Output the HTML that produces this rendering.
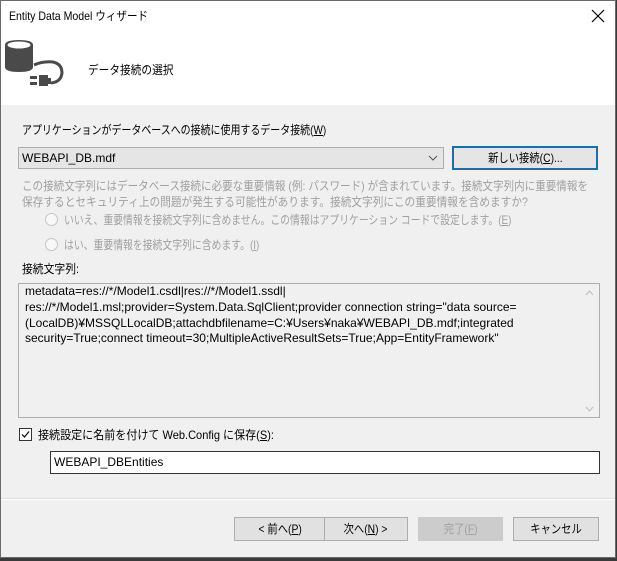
<!DOCTYPE html>
<html><head><meta charset="utf-8"><style>
*{margin:0;padding:0;box-sizing:border-box}
body{width:617px;height:561px;background:#3a3a3a;position:relative;overflow:hidden;font-family:"Liberation Sans","Noto Sans CJK JP",sans-serif;font-size:12px;color:#000}
.win{position:absolute;left:0;top:0;width:616px;height:558px;background:#f0f0f0;border:1px solid #6a6a6a}
.a{position:absolute;white-space:nowrap;line-height:16px;transform-origin:0 50%}
.g{color:#a0a0a0}
.btn{position:absolute;height:24px;border:1px solid #adadad;background:#e1e1e1;text-align:center;line-height:22px;white-space:nowrap}
.btn span{display:inline-block;transform:scaleX(0.86)}
u{text-decoration:underline}
</style></head><body>
<div class="win">
 <div style="position:absolute;left:0;top:0;width:614px;height:104px;background:#fff"></div>
 <div class="a" style="left:8px;top:7px;transform:scaleX(0.88)">Entity Data Model ウィザード</div>
 <svg style="position:absolute;left:590px;top:8px" width="14" height="14" viewBox="0 0 14 14"><path d="M1 1L13 13M13 1L1 13" stroke="#000" stroke-width="1.2"/></svg>
 <svg style="position:absolute;left:0;top:30px" width="70" height="60" viewBox="0 0 70 60">
  <path d="M4 14 Q4 9 18 9 Q32 9 32 14 V36 Q32 41 18 41 Q4 41 4 36Z" fill="#4a4a4a"/>
  <ellipse cx="18" cy="14" rx="11.5" ry="3.5" fill="#fff"/>
  <path d="M33 34 Q42 30 52 31 Q61 33 61 42 Q60 51 50 52" stroke="#4a4a4a" stroke-width="3" fill="none"/>
  <rect x="38" y="44" width="9" height="11" fill="#4a4a4a"/>
  <rect x="47" y="47" width="3" height="6" fill="#4a4a4a"/>
  <rect x="29" y="45" width="7" height="3" fill="#4a4a4a"/><rect x="29" y="51" width="7" height="3" fill="#4a4a4a"/>
 </svg>
 <div class="a" style="left:87px;top:61px;transform:scaleX(0.89)">データ接続の選択</div>

 <div class="a" style="left:21px;top:121px;transform:scaleX(0.83)">アプリケーションがデータベースへの接続に使用するデータ接続(<u>W</u>)</div>
 <div style="position:absolute;left:17px;top:146px;width:426px;height:22px;border:1px solid #adadad;background:#e5e5e5"></div>
 <div class="a" style="left:21px;top:149px">WEBAPI_DB.mdf</div>
 <svg style="position:absolute;left:427px;top:154px" width="10" height="6" viewBox="0 0 10 6"><path d="M1 1L5 5L9 1" stroke="#555" fill="none"/></svg>
 <div class="btn" style="left:451px;top:145px;width:146px;height:24px;border:2px solid #1c6ea4;line-height:20px;background:#e5e5e5"><span>新しい接続(<u>C</u>)...</span></div>

 <div class="a g" style="left:21px;top:177px;transform:scaleX(0.88)">この接続文字列にはデータベース接続に必要な重要情報 (例: パスワード) が含まれています。接続文字列内に重要情報を</div>
 <div class="a g" style="left:21px;top:193px;transform:scaleX(0.89)">保存するとセキュリティ上の問題が発生する可能性があります。接続文字列にこの重要情報を含めますか?</div>
 <div style="position:absolute;left:44px;top:212px;width:13px;height:13px;border:1px solid #c4c4c4;border-radius:50%;background:#f8f8f8"></div>
 <div class="a g" style="left:63px;top:211px;transform:scaleX(0.82)">いいえ、重要情報を接続文字列に含めません。この情報はアプリケーション コードで設定します。(<u>E</u>)</div>
 <div style="position:absolute;left:44px;top:237px;width:13px;height:13px;border:1px solid #c4c4c4;border-radius:50%;background:#f8f8f8"></div>
 <div class="a g" style="left:63px;top:236px;transform:scaleX(0.82)">はい、重要情報を接続文字列に含めます。(<u>I</u>)</div>

 <div class="a" style="left:21px;top:260px;transform:scaleX(0.9)">接続文字列:</div>
 <div style="position:absolute;left:17px;top:282px;width:582px;height:135px;border:1px solid #adadad;background:#f0f0f0"></div>
 <svg style="position:absolute;left:584px;top:289px" width="9" height="6" viewBox="0 0 9 6"><path d="M1 5L4.5 1L8 5" stroke="#bbb" fill="none"/></svg>
 <svg style="position:absolute;left:584px;top:405px" width="9" height="6" viewBox="0 0 9 6"><path d="M1 1L4.5 5L8 1" stroke="#bbb" fill="none"/></svg>
 <div class="a" style="left:24px;top:283px;line-height:15.8px">metadata=res://*/Model1.csdl|res://*/Model1.ssdl|<br>res://*/Model1.msl;provider=System.Data.SqlClient;provider connection string="data source=<br>(LocalDB)¥MSSQLLocalDB;attachdbfilename=C:¥Users¥naka¥WEBAPI_DB.mdf;integrated<br>security=True;connect timeout=30;MultipleActiveResultSets=True;App=EntityFramework"</div>

 <div style="position:absolute;left:18px;top:427px;width:13px;height:13px;border:1px solid #333;background:#fff"></div>
 <svg style="position:absolute;left:19px;top:428px" width="11" height="11" viewBox="0 0 11 11"><path d="M2 5.5L4.5 8L9 2.5" stroke="#000" stroke-width="1.2" fill="none"/></svg>
 <div class="a" style="left:37px;top:426px;transform:scaleX(0.92)">接続設定に名前を付けて Web.Config に保存(<u>S</u>):</div>
 <div style="position:absolute;left:49px;top:450px;width:550px;height:23px;border:1px solid #333;background:#fff"></div>
 <div class="a" style="left:53px;top:453px">WEBAPI_DBEntities</div>

 <div style="position:absolute;left:0;top:497px;width:614px;height:1px;background:#dfdfdf"></div>
 <div style="position:absolute;left:0;top:498px;width:614px;height:1px;background:#fff"></div>
 <div class="btn" style="left:233px;top:516px;width:93px"><span>&lt; 前へ(<u>P</u>)</span></div>
 <div class="btn" style="left:323px;top:516px;width:84px"><span>次へ(<u>N</u>) &gt;</span></div>
 <div class="btn" style="left:417px;top:516px;width:85px;border:2px solid #ccc;background:#ccc;line-height:20px;color:#a0a0a0"><span>完了(<u>F</u>)</span></div>
 <div class="btn" style="left:512px;top:516px;width:86px"><span>キャンセル</span></div>
</div>
</body></html>
